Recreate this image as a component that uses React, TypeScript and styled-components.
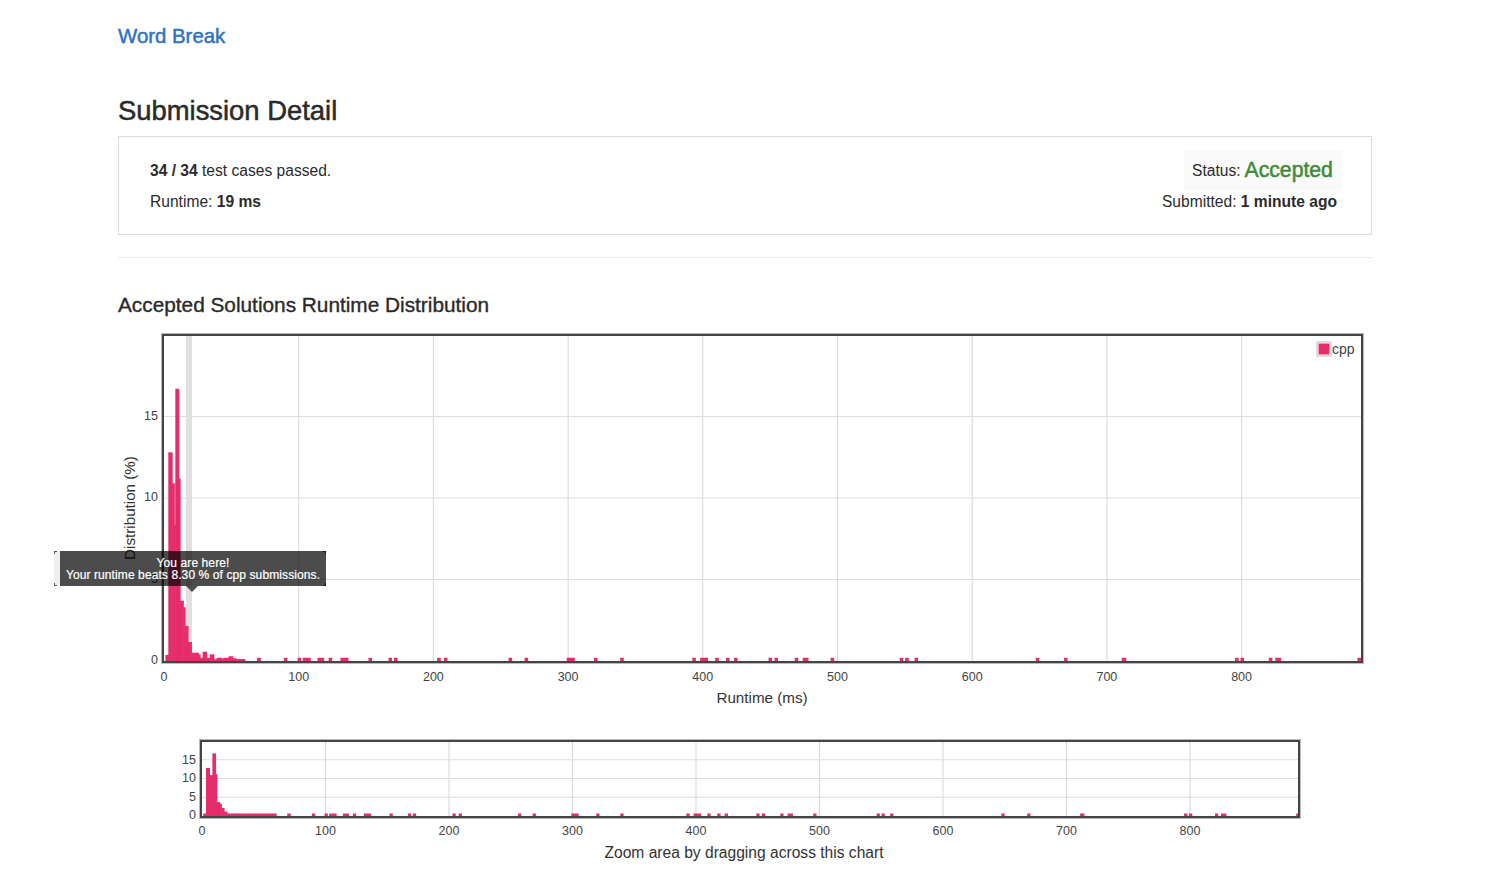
import styled, {createGlobalStyle} from "styled-components";

const GlobalStyle = createGlobalStyle`
    html, body {
        margin: 0;
        padding: 0;
        background: #fff;
        color: #2b2b2b;
        font-family: "Liberation Sans", Arial, sans-serif;
    }
`

const Page = styled.div`
    width: 1254px;
    margin-left: 118px;
    padding-top: 24px;
    position: relative;
`

const ProblemLink = styled.a`
    display: block;
    font-size: 20.4px;
    line-height: 24px;
    color: #2f71c1;
    -webkit-text-stroke: 0.45px #2f71c1;
    text-decoration: none;
`

const Title = styled.h1`
    margin: 46px 0 8px;
    font-size: 27.4px;
    line-height: 34px;
    font-weight: 400;
    color: #2a2a2a;
    -webkit-text-stroke: 0.5px #2a2a2a;
`

const ResultBox = styled.div`
    box-sizing: border-box;
    height: 99px;
    border: 1px solid #dcdcdc;
    padding: 13px 34px 0 31px;
    display: flex;
    justify-content: space-between;
    font-size: 15.6px;
    color: #2b2b2b;
`

const ResultColumn = styled.div`
    display: flex;
    flex-direction: column;
`

const ResultRight = styled(ResultColumn)`
    align-items: flex-end;
`

const ResultLine = styled.div`
    line-height: 31px;
    height: 31px;
    &:first-child {
        margin-top: 5px;
    }
`

const StatusChip = styled.div`
    box-sizing: border-box;
    height: 41px;
    width: 158px;
    margin-right: -5px;
    padding: 0 8px 2px;
    background: #fafafa;
    display: flex;
    align-items: center;
    justify-content: flex-start;
    gap: 4px;
    white-space: nowrap;
`

const StatusText = styled.span`
    padding-top: 3px;
`

const Accepted = styled.span`
    font-size: 21.2px;
    color: #3c8c38;
    -webkit-text-stroke: 0.5px #3c8c38;
`

const SubmittedLine = styled.div`
    margin-top: 1px;
    line-height: 20px;
`

const Divider = styled.hr`
    margin: 22px 0 0;
    border: 0;
    border-top: 1px solid #eaeaea;
`

const SectionTitle = styled.h3`
    margin: 35px 0 0;
    font-size: 20.8px;
    line-height: 24px;
    font-weight: 400;
    color: #2a2a2a;
    -webkit-text-stroke: 0.35px #2a2a2a;
`

const ChartArea = styled.div`
    position: relative;
    margin-top: 2px;
`

const ChartSvg = styled.svg`
    display: block;
`

const ZoomSvg = styled(ChartSvg)`
    margin-top: 20px;
`

const TickText = styled.text`
    font-family: "Liberation Sans", Arial, sans-serif;
    font-size: 12.5px;
    fill: #444;
`

const LegendText = styled(TickText)`
    font-size: 14px;
`

const AxisTitle = styled.text`
    font-family: "Liberation Sans", Arial, sans-serif;
    font-size: 15.2px;
    fill: #333;
`

const ZoomTitle = styled(AxisTitle)`
    font-size: 15.6px;
`

const Tooltip = styled.div`
    position: absolute;
    left: -64px;
    top: 232px;
    width: 272px;
    height: 35px;
    box-sizing: border-box;
    padding-left: 6px;
    background: linear-gradient(to right, #efefef 6px, transparent 6px);
`

const TooltipBody = styled.div`
    position: relative;
    height: 35px;
    box-sizing: border-box;
    padding-top: 6px;
    background: rgba(0, 0, 0, 0.7);
    color: #fff;
    font-size: 12px;
    line-height: 12px;
    text-align: center;
    letter-spacing: 0.1px;
    -webkit-text-stroke: 0.2px #fff;
    white-space: nowrap;

    &::after {
        content: "";
        position: absolute;
        left: 126px;
        top: 35px;
        border-left: 6px solid transparent;
        border-right: 6px solid transparent;
        border-top: 6px solid #4d4d4d;
    }
`

const TooltipCorner = styled.span<{ $right?: boolean; $bottom?: boolean }>`
    position: absolute;
    width: 2px;
    height: 2px;
    ${({$right}) => $right ? 'right: 0;' : 'left: 0;'}
    ${({$bottom}) => $bottom ? 'bottom: 0;' : 'top: 0;'}
    ${({$right}) => $right ? 'border-right' : 'border-left'}: 1px solid #555;
    ${({$bottom}) => $bottom ? 'border-bottom' : 'border-top'}: 1px solid #555;
`

// [start ms, width ms, percent]
const PEAK: [number, number, number][] = [
    [1, 2.2, 0.37], [3.2, 2.8, 12.8], [6, 2.4, 10.9], [8.4, 2.5, 16.7], [10.9, 1, 11.2],
    [11.9, 2.4, 3.7], [14.3, 1.3, 3.3], [15.6, 2.2, 2.15], [17.8, 2.5, 1.17], [20.3, 5.2, 0.51],
    [25.5, 1.2, 0.41], [26.7, 2, 0.2], [28.7, 2.9, 0.57], [31.6, 2.4, 0.2], [34, 3, 0.41],
    [37, 2, 0.1], [39, 3.8, 0.2], [42.8, 1.2, 0.14], [44, 4, 0.2], [48, 3, 0.29],
    [51, 2.5, 0.165], [53.5, 6.5, 0.12],
]

// lone submissions far out on the axis: [start ms, width ms]
const SPARSE: [number, number][] = [
    [69, 2.4], [89, 2.2], [99.2, 2.2], [103, 5.5], [114, 4.5], [122.2, 2.2], [131, 5.5], [151.8, 2.2],
    [166.7, 2.2], [170.7, 2.2], [202.8, 2.2], [207.8, 2.2], [255.8, 2.2], [267.7, 2.2], [299, 5.5],
    [319.2, 2.2], [338.7, 2.2], [392.2, 2.2], [398, 5.5], [409.2, 2.2], [417.2, 2.2], [423.2, 2.2],
    [448.8, 2.2], [453.2, 2.2], [468.2, 2.2], [474.2, 3.8], [494.9, 2.2], [546.2, 2.2], [550.2, 2.2],
    [557.2, 2.2], [647.2, 2.2], [668.2, 2.2], [711, 3], [795.2, 2.2], [799.2, 2.2], [820.2, 2.2],
    [825, 4], [886, 2.5],
]

const BARS: [number, number, number][] = [
    ...PEAK,
    ...SPARSE.map(([ms, w]): [number, number, number] => [ms, w, 0.2]),
]

const BAR_COLOR = '#e52d6b'
const TICKS_X = [0, 100, 200, 300, 400, 500, 600, 700, 800]
const TICKS_Y = [0, 5, 10, 15]

type PlotProps = {
    left: number;
    top: number;
    width: number;
    height: number;
    zeroY: number;
    pxPerMs: number;
    pxPerPct: number;
    zeroX: number;
    minBar: number;
    tickGap: number;
}

const Plot = ({left, top, width, height, zeroY, pxPerMs, pxPerPct, zeroX, minBar, tickGap}: PlotProps) => (
    <>
        {TICKS_X.filter((t) => t > 0).map((t) => (
            <rect key={t} x={zeroX + t * pxPerMs - 0.5} y={top} width={1} height={height} fill="#d6d6d6"/>
        ))}
        {TICKS_Y.filter((t) => t > 0).map((t) => (
            <rect key={t} x={left} y={zeroY - t * pxPerPct - 0.5} width={width} height={1} fill="#dedede"/>
        ))}
        {BARS.map(([ms, w, pct]) => {
            const h = Math.max(minBar, pct * pxPerPct);
            // the extra 0.6 closes the hairline gaps between neighbouring bars
            return <rect key={ms} x={zeroX + ms * pxPerMs} y={zeroY - h} width={w * pxPerMs + 0.6} height={h} fill={BAR_COLOR}/>;
        })}
        <rect x={left - 1.5} y={top - 1.5} width={width + 3} height={height + 3} fill="none" stroke="#bbb" strokeWidth={1}/>
        <rect x={left} y={top} width={width} height={height} fill="none" stroke="#444" strokeWidth={2}/>
        {TICKS_X.map((t) => (
            <TickText key={t} x={zeroX + t * pxPerMs} y={top + height + tickGap} textAnchor="middle">{t}</TickText>
        ))}
    </>
)

const App = () => (
    <>
        <GlobalStyle/>
        <Page>
            <ProblemLink href="#">Word Break</ProblemLink>
            <Title>Submission Detail</Title>
            <ResultBox>
                <ResultColumn>
                    <ResultLine><b>34 / 34</b> test cases passed.</ResultLine>
                    <ResultLine>Runtime: <b>19 ms</b></ResultLine>
                </ResultColumn>
                <ResultRight>
                    <StatusChip>
                        <StatusText>Status:</StatusText>
                        <Accepted>Accepted</Accepted>
                    </StatusChip>
                    <SubmittedLine>Submitted: <b>1 minute ago</b></SubmittedLine>
                </ResultRight>
            </ResultBox>
            <Divider/>
            <SectionTitle>Accepted Solutions Runtime Distribution</SectionTitle>
            <ChartArea>
                <ChartSvg width={1254} height={392}>
                    <rect x={68} y={16} width={6} height={326} fill="#e0e0e0"/>
                    <Plot left={45} top={16} width={1199} height={327} zeroY={342} zeroX={46} pxPerMs={1.347} pxPerPct={16.3} minBar={0} tickGap={19}/>
                    <rect x={56.5} y={164} width={1} height={42} fill="#f0779f"/>
                    <rect x={1199} y={23} width={14} height={14} fill="#fff" stroke="#bbb"/>
                    <rect x={1200.5} y={24.5} width={11} height={11} fill={BAR_COLOR}/>
                    <LegendText x={1214} y={35}>cpp</LegendText>
                    {TICKS_Y.map((t) => (
                        <TickText key={t} x={40} y={345 - t * 16.3} textAnchor="end">{t}</TickText>
                    ))}
                    <AxisTitle transform="translate(17 189) rotate(-90)" textAnchor="middle">Distribution (%)</AxisTitle>
                    <AxisTitle x={644} y={384} textAnchor="middle">Runtime (ms)</AxisTitle>
                </ChartSvg>
                <Tooltip>
                    <TooltipCorner/>
                    <TooltipCorner $bottom/>
                    <TooltipCorner $right/>
                    <TooltipCorner $right $bottom/>
                    <TooltipBody>You are here!<br/>Your runtime beats 8.30 % of cpp submissions.</TooltipBody>
                </Tooltip>
                <ZoomSvg width={1254} height={132}>
                    <Plot left={83} top={10} width={1098} height={76} zeroY={85} zeroX={84} pxPerMs={1.235} pxPerPct={3.75} minBar={2.5} tickGap={18}/>
                    {TICKS_Y.map((t) => (
                        <TickText key={t} x={78} y={88 - t * 3.67} textAnchor="end">{t}</TickText>
                    ))}
                    <ZoomTitle x={626} y={127} textAnchor="middle">Zoom area by dragging across this chart</ZoomTitle>
                </ZoomSvg>
            </ChartArea>
        </Page>
    </>
)

export default App
